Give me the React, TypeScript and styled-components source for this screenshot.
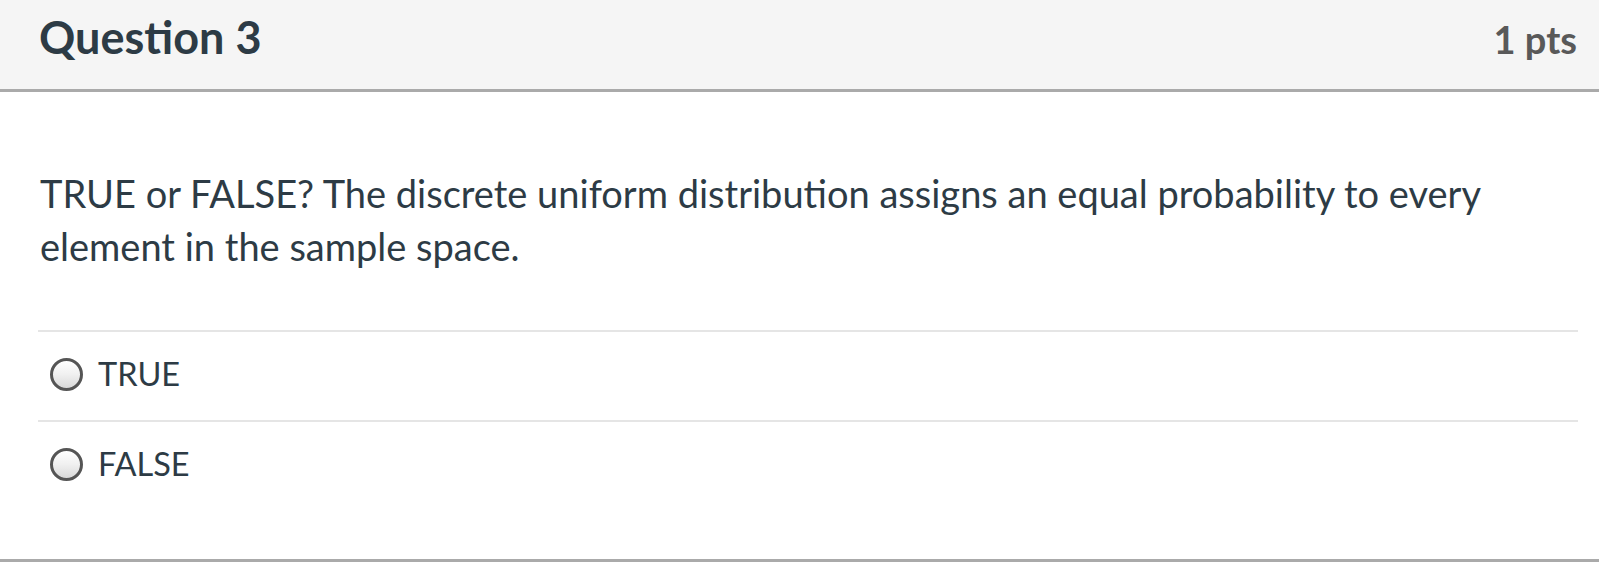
import { createGlobalStyle, styled } from "styled-components";

const GlobalStyle = createGlobalStyle`
  body {
    margin: 0;
    background: #ffffff;
    font-family: Lato, "Noto Sans", sans-serif;
  }
`;

const QuestionCard = styled.section`
  width: 1599px;
  border-bottom: 3px solid #aaaaaa;
  color: #2d3b45;
`;

const QuestionHeader = styled.header`
  display: flex;
  align-items: baseline;
  justify-content: space-between;
  box-sizing: border-box;
  height: 92px;
  padding: 10px 22px 0 39px;
  background-color: #f5f5f5;
  border-bottom: 3px solid #aaaaaa;
`;

const QuestionTitle = styled.h2`
  margin: 0;
  font-size: 45px;
  font-weight: 700;
  line-height: 1.2;
  color: #2d3b45;
`;

const QuestionPoints = styled.span`
  font-size: 38px;
  font-weight: 700;
  line-height: 1.2;
  color: #595959;
`;

const QuestionBody = styled.div`
  padding: 75px 21px 49px 40px;
`;

const QuestionText = styled.p`
  margin: 0;
  font-size: 38px;
  line-height: 53px;
`;

const AnswerList = styled.ul`
  list-style: none;
  margin: 57px 0 0 -2px;
  padding: 0;
`;

const AnswerRow = styled.li`
  display: flex;
  align-items: center;
  gap: 15px;
  box-sizing: border-box;
  height: 90px;
  padding: 0 12px 4px;
  border-top: 2px solid #e5e5e5;
  font-size: 32.5px;
  line-height: 1;
`;

const RadioCircle = styled.span`
  box-sizing: border-box;
  width: 33px;
  height: 33px;
  border: 3px solid #555555;
  border-radius: 50%;
  background: linear-gradient(180deg, #ffffff 0%, #f0f0f0 50%, #d9d9d9 100%);
`;

const answers = ["TRUE", "FALSE"];

const App = () => {
  return (
    <>
      <GlobalStyle />
      <QuestionCard>
        <QuestionHeader>
          <QuestionTitle>Question 3</QuestionTitle>
          <QuestionPoints>1 pts</QuestionPoints>
        </QuestionHeader>
        <QuestionBody>
          <QuestionText>
            TRUE or FALSE? The discrete uniform distribution assigns an equal
            probability to every element in the sample space.
          </QuestionText>
          <AnswerList>
            {answers.map((answer) => (
              <AnswerRow key={answer}>
                <RadioCircle />
                {answer}
              </AnswerRow>
            ))}
          </AnswerList>
        </QuestionBody>
      </QuestionCard>
    </>
  );
};

export default App;
